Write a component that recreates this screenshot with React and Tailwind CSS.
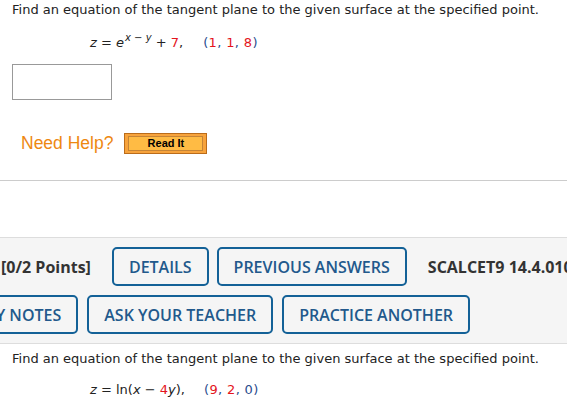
import React from "react";

const V = { fontFamily: '"DejaVu Sans", Verdana, sans-serif' };
const A = { fontFamily: '"Liberation Sans", Arial, sans-serif' };
const O = { fontFamily: '"Open Sans", sans-serif' };

function Btn({ children, className = "" }) {
  return (
    <div
      style={O}
      className={
        "h-[39px] shrink-0 flex items-center px-[15px] border-2 border-[#136197] rounded-[5px] text-[16px] font-semibold text-[#22598c] whitespace-nowrap " +
        className
      }
    >
      {children}
    </div>
  );
}

const R = ({ children }) => <span className="text-[#e4141c]">{children}</span>;
const B = ({ children }) => <span className="text-[#2a4c8e]">{children}</span>;
const I = ({ children }) => <span className="italic">{children}</span>;

export default function App() {
  return (
    <div className="w-[567px] h-[403px] overflow-hidden bg-white text-[#222]">
      <div style={V} className="pl-[12px] pt-[2px] text-[13px] leading-[16px] whitespace-nowrap">
        Find an equation of the tangent plane to the given surface at the specified point.
      </div>
      <div style={V} className="pl-[90px] mt-[17px] text-[13px] leading-[16px] whitespace-nowrap">
        <I>z</I> = <I>e</I>
        <span className="relative top-[-6px] text-[10px] italic ml-[1px]">x − y</span> + <R>7</R>,
        <span className="ml-[20px] tracking-[0.35px]">
          <B>(</B>
          <R>1</R>
          <B>, </B>
          <R>1</R>
          <B>, </B>
          <R>8</R>
          <B>)</B>
        </span>
      </div>
      <div className="ml-[12px] mt-[12px] w-[100px] h-[36px] border border-[#999]" />
      <div className="flex items-center mt-[33px] pl-[21px] h-[21px]">
        <span style={A} className="text-[17.5px] leading-[21px] text-[#ee8811]">
          Need Help?
        </span>
        <div className="ml-[11px] w-[83px] h-[21px] border border-[#bb6c1a] bg-[#f7a33c] px-[3px] pt-[2px] pb-[2px]">
          <div
            style={A}
            className="h-full border border-[#c58436] bg-[#ffbb44] flex items-center justify-center text-[11px] font-bold text-black leading-none"
          >
            Read It
          </div>
        </div>
      </div>
      <div className="mt-[26px] border-t border-[#cccccc]" />
      <div className="mt-[56px] border-t border-b border-[#dddddd] bg-[#f5f5f5] py-[9px] flex flex-col gap-[9px] overflow-hidden">
        <div className="flex items-center whitespace-nowrap">
          <span style={O} className="ml-[1px] text-[16px] font-bold text-[#333]">
            [0/2 Points]
          </span>
          <Btn className="ml-[21px]">DETAILS</Btn>
          <Btn className="ml-[8px]">PREVIOUS ANSWERS</Btn>
          <span style={O} className="ml-[21px] text-[16px] font-bold text-[#333]">
            SCALCET9 14.4.010.
          </span>
        </div>
        <div className="flex items-center whitespace-nowrap ml-[-36px]">
          <Btn>MY NOTES</Btn>
          <Btn className="ml-[9px]">ASK YOUR TEACHER</Btn>
          <Btn className="ml-[9px]">PRACTICE ANOTHER</Btn>
        </div>
      </div>
      <div style={V} className="pl-[12px] mt-[7px] text-[13px] leading-[16px] whitespace-nowrap">
        Find an equation of the tangent plane to the given surface at the specified point.
      </div>
      <div style={V} className="pl-[90px] mt-[15px] text-[13px] leading-[16px] whitespace-nowrap">
        <I>z</I> = ln(<I>x</I> − <R>4</R>
        <I>y</I>),
        <span className="ml-[19px] tracking-[0.35px]">
          <B>(</B>
          <R>9</R>
          <B>, </B>
          <R>2</R>
          <B>, 0)</B>
        </span>
      </div>
    </div>
  );
}
